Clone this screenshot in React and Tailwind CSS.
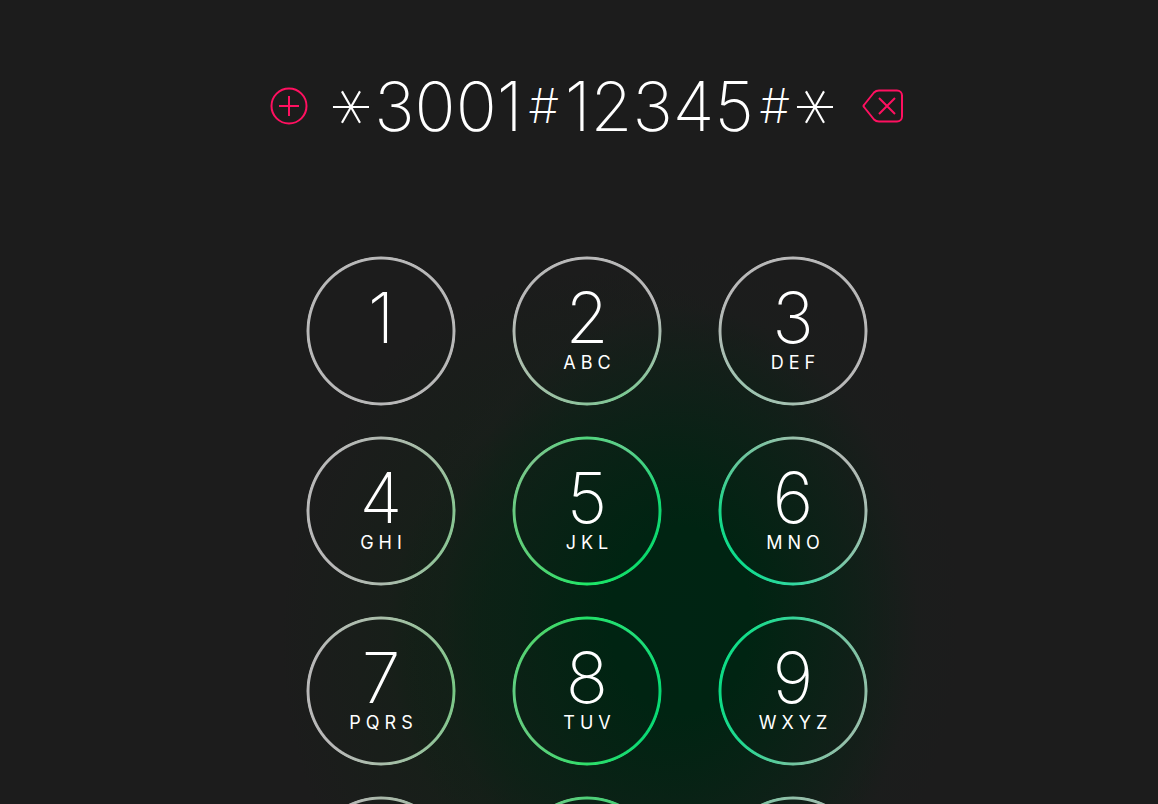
import React from "react";

const keys = [
  { digit: "1", letters: "", ring: "bg-[#b8b8b8]" },
  { digit: "2", letters: "ABC", ring: "bg-[conic-gradient(#b8b8b8_0deg,#b8b8b8_70deg,#a3bfac_100deg,#7cc893_150deg,#8cc39c_180deg,#a6bfa9_230deg,#b8b8b8_290deg,#b8b8b8_360deg)]" },
  { digit: "3", letters: "DEF", ring: "bg-[conic-gradient(#b8b8b8_0deg,#b8b8b8_140deg,#a5c0b1_180deg,#9cc4b0_220deg,#b0bab4_270deg,#b8b8b8_300deg,#b8b8b8_360deg)]" },
  { digit: "4", letters: "GHI", ring: "bg-[conic-gradient(#b0b8b0_0deg,#a0bfa2_50deg,#88c692_90deg,#90c398_130deg,#adbaae_180deg,#b8b8b8_220deg,#b8b8b8_320deg,#b0b8b0_360deg)]" },
  { digit: "5", letters: "JKL", ring: "bg-[conic-gradient(#50d47c_0deg,#5fcd8c_30deg,#14d873_80deg,#0ad96c_130deg,#1fe767_180deg,#58cf74_225deg,#68cb80_270deg,#7bc68c_315deg,#50d47c_360deg)]" },
  { digit: "6", letters: "MNO", ring: "bg-[conic-gradient(#98c0aa_0deg,#b3b9b5_45deg,#a7beb3_90deg,#85c4a8_130deg,#31d8a0_180deg,#0cdc8c_225deg,#19d889_270deg,#62c69a_310deg,#98c0aa_360deg)]" },
  { digit: "7", letters: "PQRS", ring: "bg-[conic-gradient(#a9bea9_0deg,#90c396_50deg,#78c884_90deg,#90c398_130deg,#a9bdaa_180deg,#b8b8b8_220deg,#b8b8b8_300deg,#a9bea9_360deg)]" },
  { digit: "8", letters: "TUV", ring: "bg-[conic-gradient(#22e068_0deg,#20dd78_40deg,#08d973_90deg,#0cd974_130deg,#2fdf6a_180deg,#62cc7c_225deg,#5fce80_270deg,#50d46c_320deg,#22e068_360deg)]" },
  { digit: "9", letters: "WXYZ", ring: "bg-[conic-gradient(#35d498_0deg,#76c4a2_40deg,#92c0a9_90deg,#96bfaa_130deg,#72c5a0_180deg,#20d991_225deg,#0cdb84_270deg,#13dc88_320deg,#35d498_360deg)]" },
];

// the last row only peeks in at the bottom of the window
const lastRow = [
  { name: "Star", ring: "bg-[conic-gradient(#a9b8a9_0deg,#a0bca2_90deg,#b8b8b8_180deg,#b8b8b8_330deg,#a9b8a9_360deg)]" },
  { name: "Zero", ring: "bg-[conic-gradient(#4fd078_0deg,#3cc97a_90deg,#6cc688_180deg,#78c68a_320deg,#4fd078_360deg)]" },
  { name: "Pound", ring: "bg-[conic-gradient(#92c0a9_0deg,#b0bab4_60deg,#b8b8b8_180deg,#72c5a0_320deg,#92c0a9_360deg)]" },
];

const DialKey = ({ digit, letters, name, ring }) => {
  return (
    <button
      type="button"
      aria-label={name}
      className="relative flex size-[150px] flex-col items-center rounded-full pt-7"
    >
      <span
        className={`absolute inset-0 rounded-full mask-[radial-gradient(circle_closest-side,transparent_71px,black_72px,black_74px,transparent_75px)] ${ring}`}
      />
      {digit && (
        <span className="text-[70px] leading-[68px] font-extralight">{digit}</span>
      )}
      {letters && (
        <span className="pl-[5px] text-lg leading-[22px] tracking-[5px]">
          {letters}
        </span>
      )}
    </button>
  );
};

// turned on its side so that one arm lies flat, like on a phone keypad
const Star = () => (
  <span className="w-[42px] rotate-90 pt-8 text-center text-[88px] leading-[48px] font-thin">
    *
  </span>
);

const Pound = () => (
  <span className="w-[42px] text-center text-5xl font-extralight">#</span>
);

const App = () => {
  return (
    <main className="h-screen overflow-hidden bg-[#1c1c1c] bg-[radial-gradient(ellipse_280px_370px_at_680px_620px,#002413_0%,#002412_25%,#0c2117cc_60%,#1a1e1c66_85%,transparent_100%),radial-gradient(ellipse_310px_370px_at_590px_640px,#002409_0%,#04240fdd_35%,#14211788_65%,transparent_100%)] pl-4 font-['Inter',sans-serif] text-white">
      <div className="flex items-center justify-center gap-6 pt-[66px]">
        <button type="button" aria-label="Add contact" className="text-[#ff1060]">
          <svg width="38" height="38" viewBox="0 0 38 38" fill="none" stroke="currentColor" strokeWidth="2">
            <circle cx="19" cy="19" r="17.5" />
            <path d="M19 9v20M9 19h20" />
          </svg>
        </button>
        <output className="flex items-center text-[68px] leading-[80px] font-extralight">
          <Star />
          <span>3001</span>
          <Pound />
          <span>12345</span>
          <Pound />
          <Star />
        </output>
        <button type="button" aria-label="Delete" className="text-[#ff1060]">
          <svg width="42" height="34" viewBox="0 0 42 34" fill="none" stroke="currentColor" strokeWidth="2" strokeLinejoin="round">
            <path d="M17 1.5h18a5 5 0 0 1 5 5v21a5 5 0 0 1-5 5H17q-3 0-5-2L2 18q-1-1 0-2L12 3.500q2-2 5-2z" />
            <path d="M17 9l16 16M33 9L17 25" />
          </svg>
        </button>
      </div>

      <div className="mt-[110px] grid grid-cols-[150px_150px_150px] justify-center gap-x-14 gap-y-[30px]">
        {keys.map((key) => (
          <DialKey key={key.digit} {...key} />
        ))}
        {lastRow.map((key) => (
          <DialKey key={key.name} {...key} />
        ))}
      </div>
    </main>
  );
};

export default App;
